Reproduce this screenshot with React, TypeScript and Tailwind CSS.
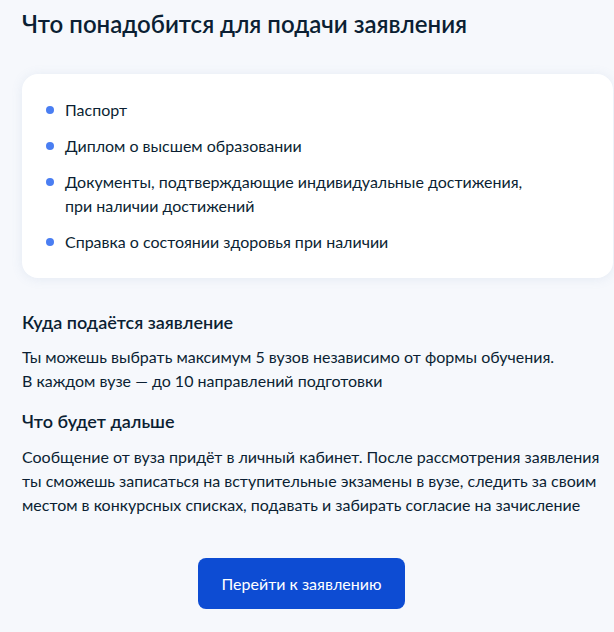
import React from 'react';

const docs = [
  'Паспорт',
  'Диплом о высшем образовании',
  'Документы, подтверждающие индивидуальные достижения,\nпри наличии достижений',
  'Справка о состоянии здоровья при наличии',
];

export default function App() {
  return (
    <div
      className="min-h-[632px] w-full bg-[#f6f8fc] pl-[22px] pr-[1px] pt-[9px] pb-6 text-[#0b1f33]"
      style={{ fontFamily: 'Lato, "Noto Sans", sans-serif' }}
    >
      <h2 className="text-[24px] leading-[30px] font-semibold">Что понадобится для подачи заявления</h2>

      <div className="mt-[35px] rounded-2xl bg-white px-6 py-6 shadow-[0_1px_12px_rgba(102,132,180,0.12)]">
        <ul className="flex flex-col gap-3">
          {docs.map((d) => (
            <li key={d} className="flex items-start gap-[11px] text-[16px] leading-[24px]">
              <span className="mt-[8px] h-2 w-2 shrink-0 rounded-full bg-[#4a7ef2]" />
              <span className="whitespace-pre-line">{d}</span>
            </li>
          ))}
        </ul>
      </div>

      <h3 className="mt-[32px] text-[18px] leading-[24px] font-semibold">Куда подаётся заявление</h3>
      <p className="mt-[11px] text-[16px] leading-[24px]">
        Ты можешь выбрать максимум 5 вузов независимо от формы обучения.
        <br />
        В каждом вузе — до 10 направлений подготовки
      </p>

      <h3 className="mt-[16px] text-[18px] leading-[24px] font-semibold">Что будет дальше</h3>
      <p className="mt-[12px] text-[16px] leading-[24px]">
        Сообщение от вуза придёт в личный кабинет. После рассмотрения заявления ты сможешь записаться на вступительные
        экзамены в вузе, следить за своим местом в конкурсных списках, подавать и забирать согласие на зачисление
      </p>

      <div className="mt-[41px] flex justify-center pr-[32px]">
        <button className="h-[51px] w-[207px] rounded-lg bg-[#0d4cd3] text-[16px] text-white">
          Перейти к заявлению
        </button>
      </div>
    </div>
  );
}
